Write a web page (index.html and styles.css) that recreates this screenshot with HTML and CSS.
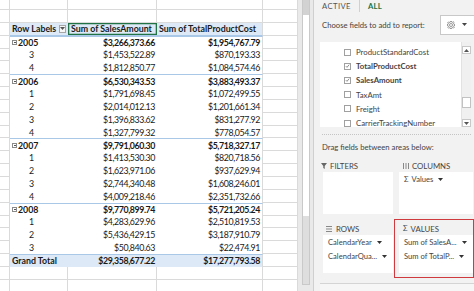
FILE: index.html
```html
<!DOCTYPE html>
<html>
<head>
<meta charset="utf-8">
<link rel="stylesheet" href="styles.css">
</head>
<body>
<div class="app">
  <div class="sheet">
    <div class="row top"><div class="c"></div><div class="c"></div><div class="c"></div><div class="c"></div><div class="c"></div></div>
    <div class="row"><div class="c"></div><div class="c"></div><div class="c"></div><div class="c"></div><div class="c"></div></div>
    <div class="row head">
      <div class="c"></div>
      <div class="p lbl b">Row Labels<span class="dd"><svg width="5" height="3" viewBox="0 0 5 3"><path d="M0 0H5L2.5 3Z" fill="#555"/></svg></span></div>
      <div class="p b hsel">Sum of SalesAmount</div>
      <div class="p b end">Sum of TotalProductCost</div>
      <div class="c"></div>
    </div>
    <div class="row yr"><div class="c"></div><div class="p lbl b"><span class="mn"></span>2005</div><div class="p num b">$3,266,373.66</div><div class="p num b end">$1,954,767.79</div><div class="c"></div></div>
    <div class="row"><div class="c"></div><div class="p q">3</div><div class="p num">$1,453,522.89</div><div class="p num end">$870,193.33</div><div class="c"></div></div>
    <div class="row"><div class="c"></div><div class="p q">4</div><div class="p num">$1,812,850.77</div><div class="p num end">$1,084,574.46</div><div class="c"></div></div>
    <div class="row yr"><div class="c"></div><div class="p lbl b"><span class="mn"></span>2006</div><div class="p num b">$6,530,343.53</div><div class="p num b end">$3,883,493.37</div><div class="c"></div></div>
    <div class="row"><div class="c"></div><div class="p q">1</div><div class="p num">$1,791,698.45</div><div class="p num end">$1,072,499.55</div><div class="c"></div></div>
    <div class="row"><div class="c"></div><div class="p q">2</div><div class="p num">$2,014,012.13</div><div class="p num end">$1,201,661.34</div><div class="c"></div></div>
    <div class="row"><div class="c"></div><div class="p q">3</div><div class="p num">$1,396,833.62</div><div class="p num end">$831,277.92</div><div class="c"></div></div>
    <div class="row"><div class="c"></div><div class="p q">4</div><div class="p num">$1,327,799.32</div><div class="p num end">$778,054.57</div><div class="c"></div></div>
    <div class="row yr"><div class="c"></div><div class="p lbl b"><span class="mn"></span>2007</div><div class="p num b">$9,791,060.30</div><div class="p num b end">$5,718,327.17</div><div class="c"></div></div>
    <div class="row"><div class="c"></div><div class="p q">1</div><div class="p num">$1,413,530.30</div><div class="p num end">$820,718.56</div><div class="c"></div></div>
    <div class="row"><div class="c"></div><div class="p q">2</div><div class="p num">$1,623,971.06</div><div class="p num end">$937,629.94</div><div class="c"></div></div>
    <div class="row"><div class="c"></div><div class="p q">3</div><div class="p num">$2,744,340.48</div><div class="p num end">$1,608,246.01</div><div class="c"></div></div>
    <div class="row"><div class="c"></div><div class="p q">4</div><div class="p num">$4,009,218.46</div><div class="p num end">$2,351,732.66</div><div class="c"></div></div>
    <div class="row yr"><div class="c"></div><div class="p lbl b"><span class="mn"></span>2008</div><div class="p num b">$9,770,899.74</div><div class="p num b end">$5,721,205.24</div><div class="c"></div></div>
    <div class="row"><div class="c"></div><div class="p q">1</div><div class="p num">$4,283,629.96</div><div class="p num end">$2,510,819.53</div><div class="c"></div></div>
    <div class="row"><div class="c"></div><div class="p q">2</div><div class="p num">$5,436,429.15</div><div class="p num end">$3,187,910.79</div><div class="c"></div></div>
    <div class="row"><div class="c"></div><div class="p q">3</div><div class="p num">$50,840.63</div><div class="p num end">$22,474.91</div><div class="c"></div></div>
    <div class="row gt"><div class="c"></div><div class="p lbl b">Grand Total</div><div class="p num b">$29,358,677.22</div><div class="p num b end">$17,277,793.58</div><div class="c"></div></div>
    <div class="row"><div class="c"></div><div class="c"></div><div class="c"></div><div class="c"></div><div class="c"></div></div>
    <div class="row"><div class="c"></div><div class="c"></div><div class="c"></div><div class="c"></div><div class="c"></div></div>
  </div>

  <div class="vscroll">
    <div class="track"><div class="thumb"></div><div class="fill"></div></div>
  </div>

  <div class="pane">
    <div class="tabs">
      <span class="tab">ACTIVE</span>
      <span class="tsep"></span>
      <span class="tab on">ALL</span>
    </div>
    <div class="choose">
      <span>Choose fields to add to report:</span>
      <div class="gear">
        <svg width="8" height="8" viewBox="0 0 16 16"><path d="M7 0h2l.4 2.2 1.5.6 1.8-1.3 1.4 1.4-1.3 1.8.6 1.5L16 7v2l-2.2.4-.6 1.5 1.3 1.8-1.4 1.4-1.8-1.3-1.5.6L9 16H7l-.4-2.2-1.5-.6-1.8 1.3-1.4-1.4 1.3-1.8-.6-1.5L0 9V7l2.2-.4.6-1.5-1.3-1.8 1.4-1.4 1.8 1.3 1.5-.6Z M8 5a3 3 0 1 0 0 6a3 3 0 1 0 0-6Z" fill="none" stroke="#666" stroke-width="1.3"/></svg>
        <svg width="5" height="3" viewBox="0 0 5 3"><path d="M0 0H5L2.5 3Z" fill="#444"/></svg>
      </div>
    </div>
    <div class="fields">
      <div class="flist">
        <div class="fi"><span class="cb"></span>ProductStandardCost</div>
        <div class="fi b"><span class="cb"><svg width="6" height="6" viewBox="0 0 6 6"><path d="M1 3.2L2.4 4.6L5 1.4" fill="none" stroke="#555" stroke-width="0.8"/></svg></span>TotalProductCost</div>
        <div class="fi b"><span class="cb"><svg width="6" height="6" viewBox="0 0 6 6"><path d="M1 3.2L2.4 4.6L5 1.4" fill="none" stroke="#555" stroke-width="0.8"/></svg></span>SalesAmount</div>
        <div class="fi"><span class="cb"></span>TaxAmt</div>
        <div class="fi"><span class="cb"></span>Freight</div>
        <div class="fi"><span class="cb"></span>CarrierTrackingNumber</div>
      </div>
      <div class="fscroll">
        <div class="arr"><svg width="5" height="3" viewBox="0 0 5 3"><path d="M0 3H5L2.5 0Z" fill="#555"/></svg></div>
        <div class="ftrack"><div class="fthumb"></div></div>
        <div class="arr"><svg width="5" height="3" viewBox="0 0 5 3"><path d="M0 0H5L2.5 3Z" fill="#555"/></svg></div>
      </div>
    </div>
    <div class="splitter"></div>
    <div class="drag">Drag fields between areas below:</div>
    <div class="areas">
      <div class="area">
        <div class="ah ah-f"><svg class="ic" width="6" height="6" viewBox="0 0 6 6"><path d="M0 0H6L3.7 3V6L2.3 5V3Z" fill="#666"/></svg>FILTERS</div>
        <div class="abox short"></div>
      </div>
      <div class="area">
        <div class="ah"><svg class="ic" width="6" height="6" viewBox="0 0 6 6"><path d="M0.5 0V6M3 0V6M5.5 0V6" stroke="#888" stroke-width="1"/></svg>COLUMNS</div>
        <div class="abox short"><div class="ai"><span class="sig">Σ</span>Values<svg class="ad" width="5" height="3" viewBox="0 0 5 3"><path d="M0 0H5L2.5 3Z" fill="#333"/></svg></div></div>
      </div>
      <div class="area">
        <div class="ah ah-r"><svg class="ic" width="6" height="6" viewBox="0 0 6 6"><path d="M0 0.5H6M0 3H6M0 5.5H6" stroke="#888" stroke-width="1"/></svg>ROWS</div>
        <div class="abox tall">
          <div class="ai">CalendarYear<svg class="ad" width="5" height="3" viewBox="0 0 5 3"><path d="M0 0H5L2.5 3Z" fill="#333"/></svg></div>
          <div class="ai">CalendarQua...<svg class="ad" width="5" height="3" viewBox="0 0 5 3"><path d="M0 0H5L2.5 3Z" fill="#333"/></svg></div>
        </div>
      </div>
      <div class="area vals">
        <div class="ah"><span class="sig">Σ</span>VALUES</div>
        <div class="abox tall">
          <div class="ai">Sum of SalesA...<svg class="ad" width="5" height="3" viewBox="0 0 5 3"><path d="M0 0H5L2.5 3Z" fill="#333"/></svg></div>
          <div class="ai">Sum of TotalP...<svg class="ad" width="5" height="3" viewBox="0 0 5 3"><path d="M0 0H5L2.5 3Z" fill="#333"/></svg></div>
        </div>
        <div class="mark"></div>
      </div>
    </div>
    <div class="bottom"></div>
  </div>
</div>
</body>
</html>
```

FILE: styles.css
```css
* { box-sizing: border-box; margin: 0; padding: 0; }
html, body { width: 474px; height: 291px; overflow: hidden; background: #fff; }
body { font-family: Lato, "Liberation Sans", sans-serif; color: #222; }

.app { display: flex; width: 474px; height: 291px; }

/* spreadsheet */
.sheet { width: 298px; flex: none; display: flex; flex-direction: column; font-size: 8.8px; color: #1a1a1a; overflow: hidden; }
.row { display: grid; grid-template-columns: 10px 58px 89px 106px 35px; height: 12.85px; flex: none; }
.row.top { height: 10px; }
.c { border-right: 1px solid #dadada; border-bottom: 1px solid #dadada; }
.p { background: #fff; display: flex; align-items: center; white-space: nowrap; overflow: hidden; padding: 0 2px; }
.p.end { border-right: 1px solid #dadada; }
.b { font-weight: 700; }
.num { justify-content: flex-end; padding-right: 2px; letter-spacing: -0.4px; }
.q { padding-left: 19px; }
.lbl { padding-left: 2px; }

.head .p { background: #dde9f6; border-bottom: 1px solid #a9c7e6; }
.head .p.end { border-right: 1px solid #dadada; }
.hsel { box-shadow: inset 0 0 0 1.3px #217346; padding-left: 3px; }
.dd { margin-left: 3px; width: 9px; height: 8px; border: 1px solid #a6a6a6; background: #f6f6f6; display: flex; align-items: center; justify-content: center; }

.yr .p { border-top: 1px solid #a9c7e6; }
.mn { width: 5px; height: 5px; border: 1px solid #8a8a8a; margin-right: 1px; position: relative; background: #fff; flex: none; }
.mn::after { content: ""; position: absolute; left: 0.5px; right: 0.5px; top: 1px; height: 1px; background: #555; }

.gt .p { background: #dde9f6; border-top: 1px solid #a9c7e6; }

/* excel vertical scrollbar */
.vscroll { width: 15px; flex: none; background: #e9e9e9; padding: 0 3px 6px 4px; }
.track { height: 100%; background: #fff; border-left: 1px solid #c9c9c9; border-right: 1px solid #c9c9c9; border-bottom: 1px solid #c9c9c9; display: flex; flex-direction: column; justify-content: space-between; }
.thumb { height: 15px; background: #d2d2d2; }
.fill { height: 68px; background: #dedede; }

/* field list pane */
.pane { flex: 1; background: #f2f2f2; border-left: 1px solid #cfcfcf; color: #444; font-size: 7.7px; display: flex; flex-direction: column; padding-left: 6px; position: relative; }
.tabs { height: 12px; display: flex; align-items: center; padding-left: 2px; }
.tab { letter-spacing: 0.4px; color: #555; }
.tab.on { color: #217346; font-weight: 700; letter-spacing: 0.2px; }
.tsep { width: 1px; height: 12px; background: #d0d0d0; margin: 0 8px; }
.choose { height: 25px; display: flex; align-items: center; justify-content: space-between; padding-left: 2px; }
.gear { width: 34px; height: 20px; background: #fff; border: 1px solid #c8c8c8; border-right: none; display: flex; align-items: center; gap: 7px; padding-left: 6px; }
.fields { height: 85px; margin-top: 5px; margin-right: 3px; background: #fff; display: flex; }
.flist { flex: 1; padding: 3px 0 0 24px; overflow: hidden; font-size: 7.8px; }
.fi { height: 14.2px; display: flex; align-items: center; white-space: nowrap; }
.cb { width: 7px; height: 7px; border: 1px solid #a0a0a0; background: #fff; margin-right: 5px; display: flex; align-items: center; justify-content: center; flex: none; }
.fscroll { width: 10px; background: #f0f0f0; border-left: 1px solid #e2e2e2; display: flex; flex-direction: column; padding-top: 4px; }
.arr { height: 8px; display: flex; align-items: center; justify-content: center; background: #fff; border: 1px solid #c8c8c8; }
.ftrack { flex: 1; padding-top: 43px; }
.fthumb { height: 11px; background: #fff; border: 1px solid #c2c2c2; }
.splitter { height: 1px; margin: 7px 3px 0 2px; border-top: 1px dotted #c4c4c4; }
.drag { height: 24px; display: flex; align-items: center; padding-left: 2px; }

.areas { display: grid; grid-template-columns: 70px 74px; column-gap: 6px; padding-left: 3px; row-gap: 8px; }
.area { display: flex; flex-direction: column; position: relative; }
.ah { height: 13px; display: flex; align-items: center; font-size: 7.8px; padding-left: 4px; }
.ah .ic { margin-right: 3px; }
.ah.ah-f { padding-left: 0; margin-left: -2px; }
.ah.ah-r { padding-left: 3px; }
.ah-r .ic { margin-right: 4px; }
.sig { margin-right: 3px; font-size: 7.5px; }
.abox { background: #fff; }
.abox.short { height: 42px; }
.abox.tall { height: 38px; }
.ai { height: 14px; display: flex; align-items: center; padding-left: 5px; white-space: nowrap; font-size: 7.6px; }
.ai .ad { margin-left: 5px; }
.mark { position: absolute; left: -5px; right: -1px; top: -3px; bottom: -5px; border: 1.5px solid #cf3a3f; }
.bottom { margin-top: auto; height: 8px; border-top: 1px solid #d4d4d4; background: #f6f6f6; }
```
